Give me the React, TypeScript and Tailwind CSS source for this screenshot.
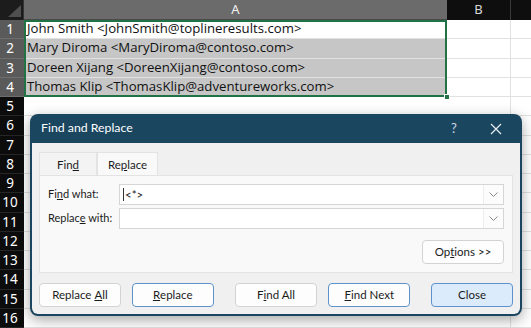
import React from "react";

const rowsData: Record<number, string> = {
  1: "John Smith <JohnSmith@toplineresults.com>",
  2: "Mary Diroma <MaryDiroma@contoso.com>",
  3: "Doreen Xijang <DoreenXijang@contoso.com>",
  4: "Thomas Klip <ThomasKlip@adventureworks.com>",
};

function Chevron() {
  return (
    <div className="w-[20px] h-full flex items-center justify-center bg-[#fcfcfc] border-l border-[#eeeeee]">
      <svg width="9" height="5" viewBox="0 0 9 5" fill="none">
        <path d="M0.5 0.5 L4.5 4.5 L8.5 0.5" stroke="#8a8a8a" strokeWidth="1" />
      </svg>
    </div>
  );
}

function Btn({
  children,
  variant = "normal",
  className = "",
}: {
  children: React.ReactNode;
  variant?: "normal" | "focus" | "primary";
  className?: string;
}) {
  const v =
    variant === "primary"
      ? "bg-[#dcebfb] border-[#5d93cc]"
      : variant === "focus"
      ? "bg-[#fdfdfd] border-[#5d93cc]"
      : "bg-[#fdfdfd] border-[#d3d3d3]";
  return (
    <div
      className={`h-[24px] rounded-[4px] border flex items-center justify-center text-[11.5px] text-[#1b1b1b] whitespace-nowrap ${v} ${className}`}
    >
      {children}
    </div>
  );
}

export default function App() {
  const rows = Array.from({ length: 16 }, (_, i) => i + 1);
  return (
    <div className="relative w-[531px] h-[328px] overflow-hidden bg-white" style={{ fontFamily: '"Noto Sans", sans-serif' }}>
      {/* column header */}
      <div className="flex h-[20px]">
        <div className="w-[24px] h-full bg-[#1c1c1c] relative border-r border-[#333]">
          <svg className="absolute right-[2px] bottom-[3px]" width="13" height="12" viewBox="0 0 13 12">
            <polygon points="13,0 13,12 0,12" fill="#4f4f4f" />
          </svg>
        </div>
        <div className="w-[423px] h-full bg-[#6b6b6b] flex items-center justify-center text-[13px] text-[#f2f2f2] border-b border-[#4a4a4a]">
          A
        </div>
        <div className="w-[64px] h-full bg-[#0e0e0e] flex items-center justify-center text-[13px] text-[#d8d8d8] border-r border-[#3a3a3a]">
          B
        </div>
        <div className="flex-1 h-full bg-[#0e0e0e]" />
      </div>
      {/* rows */}
      {rows.map((r) => {
        const sel = r <= 4;
        const cellBg = r === 1 ? "bg-white" : sel ? "bg-[#c6c6c6]" : "bg-white";
        return (
          <div key={r} className="flex h-[19.25px]">
            <div
              className={`w-[24px] h-full flex items-center justify-center pr-[4px] text-[13.5px] text-white border-b ${
                sel ? "bg-[#5a5a5a] border-[#6e6e6e]" : "bg-[#0c0c0c] border-[#262626]"
              }`}
            >
              {r}
            </div>
            <div
              className={`w-[423px] h-full ${cellBg} border-b border-[#e1e1e1] flex items-center pl-[3px] text-[13.2px] text-[#111] whitespace-nowrap overflow-hidden`}
              style={{ fontFamily: '"Open Sans", sans-serif' }}
            >
              {rowsData[r] ?? ""}
            </div>
            <div className="w-[64px] h-full border-b border-r border-[#e1e1e1]" />
            <div className="flex-1 h-full border-b border-[#e1e1e1]" />
          </div>
        );
      })}

      {/* selection border */}
      <div className="absolute left-[24px] top-[20px] w-[423px] h-[77px] border-2 border-[#217346] pointer-events-none" />
      <div className="absolute left-[444px] top-[94px] w-[6px] h-[6px] bg-[#217346] border border-white" />

      {/* dialog */}
      <div
        className="absolute left-[30px] top-[114px] w-[492px] h-[202px] rounded-[8px] bg-[#1a4660] px-[2px] pb-[2px] flex flex-col shadow-[0_4px_14px_rgba(0,0,0,0.35)]"
        style={{ fontFamily: 'Lato, "Noto Sans", sans-serif' }}
      >
        <div className="h-[29px] flex items-center pl-[9px] text-white text-[12.3px]">
          <span className="flex-1">Find and Replace</span>
          <span className="w-[20px] text-center text-[13px] text-[#d0dbe3] mr-[26px]">?</span>
          <svg width="12" height="12" viewBox="0 0 12 12" className="mr-[18px]">
            <path d="M1 1 L11 11 M11 1 L1 11" stroke="#e8eef2" strokeWidth="1.2" />
          </svg>
        </div>
        <div className="flex-1 bg-[#f0f0f0] rounded-b-[6px] flex flex-col px-[7px] pt-[9px]">
          {/* tabs */}
          <div className="flex h-[23px] text-[11.5px] text-[#1b1b1b]">
            <div className="w-[58px] h-full border border-b-0 border-[#e3e3e3] bg-[#f3f3f3] flex items-center justify-center pt-[2px]">
              <span>
                Fin<span className="underline">d</span>
              </span>
            </div>
            <div className="w-[61px] h-full border border-b-0 border-[#e3e3e3] bg-[#f9f9f9] flex items-center justify-center pt-[2px] relative z-10 -mb-px">
              <span>
                Re<span className="underline">p</span>lace
              </span>
            </div>
          </div>
          {/* panel */}
          <div className="h-[98px] bg-[#f9f9f9] border border-[#e3e3e3] flex flex-col pt-[8px] pl-[8px] pr-[8px]">
            <div className="flex items-center h-[21px]">
              <div className="w-[71px] text-[11px] text-[#1b1b1b] whitespace-nowrap">
                Fi<span className="underline">n</span>d what:
              </div>
              <div className="flex-1 h-full bg-white border border-[#d6d6d6] flex">
                <div className="flex-1 flex items-center pl-[3px] text-[11.5px] text-[#222]">
                  <span className="w-px h-[13px] bg-[#333] mr-[1px]" />
                  &lt;*&gt;
                </div>
                <Chevron />
              </div>
            </div>
            <div className="flex items-center h-[21px] mt-[3px]">
              <div className="w-[71px] text-[11px] text-[#1b1b1b] whitespace-nowrap">
                Replac<span className="underline">e</span> with:
              </div>
              <div className="flex-1 h-full bg-white border border-[#d6d6d6] flex">
                <div className="flex-1" />
                <Chevron />
              </div>
            </div>
            <div className="flex justify-end mt-[11px]">
              <Btn className="w-[82px]">
                Op<span className="underline">t</span>ions &gt;&gt;
              </Btn>
            </div>
          </div>
          {/* buttons */}
          <div className="flex mt-[10px]">
            <Btn className="w-[82px]">
              Replace&nbsp;<span className="underline">A</span>ll
            </Btn>
            <Btn variant="focus" className="w-[82px] ml-[11px]">
              <span className="underline">R</span>eplace
            </Btn>
            <Btn className="w-[83px] ml-[21px]">
              F<span className="underline">i</span>nd All
            </Btn>
            <Btn variant="focus" className="w-[82px] ml-[11px]">
              <span className="underline">F</span>ind Next
            </Btn>
            <Btn variant="primary" className="w-[82px] ml-[21px]">
              Close
            </Btn>
          </div>
        </div>
      </div>
    </div>
  );
}
